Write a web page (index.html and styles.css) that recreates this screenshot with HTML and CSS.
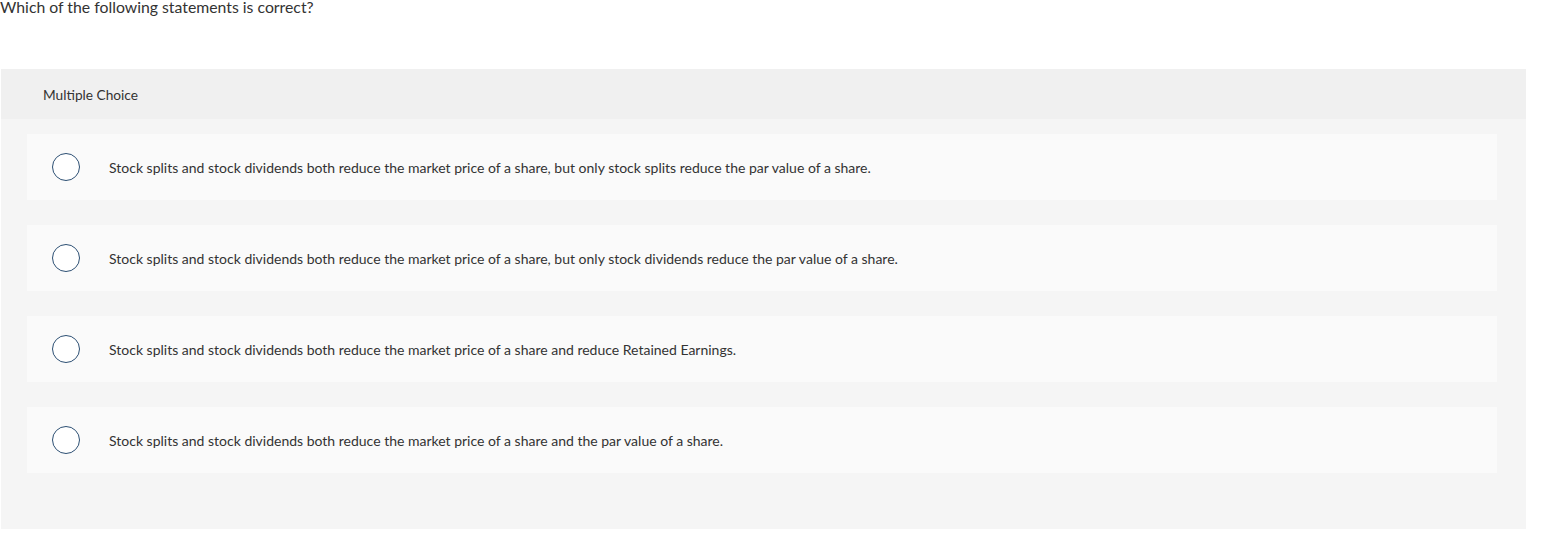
FILE: index.html
```html
<!DOCTYPE html>
<html>
<head>
<meta charset="utf-8">
<link rel="stylesheet" href="styles.css">
</head>
<body>
<p class="prompt">Which of the following statements is correct?</p>
<div class="question">
  <div class="qhead">Multiple Choice</div>
  <div class="choices">
    <div class="choice"><span class="radio"></span><span class="label">Stock splits and stock dividends both reduce the market price of a share, but only stock splits reduce the par value of a share.</span></div>
    <div class="choice"><span class="radio"></span><span class="label">Stock splits and stock dividends both reduce the market price of a share, but only stock dividends reduce the par value of a share.</span></div>
    <div class="choice"><span class="radio"></span><span class="label">Stock splits and stock dividends both reduce the market price of a share and reduce Retained Earnings.</span></div>
    <div class="choice"><span class="radio"></span><span class="label">Stock splits and stock dividends both reduce the market price of a share and the par value of a share.</span></div>
  </div>
</div>
</body>
</html>
```
FILE: styles.css
```css
html, body {
  margin: 0;
  padding: 0;
  background: #ffffff;
}
body {
  font-family: Lato, "Liberation Sans", sans-serif;
  color: #333333;
}
.prompt {
  margin: 0;
  font-size: 15.8px;
  line-height: 14px;
  height: 69px;
  color: #333;
}
.question {
  margin-left: 1px;
  width: 1525px;
  height: 460px;
  background: #f5f5f5;
  box-sizing: border-box;
}
.qhead {
  height: 50px;
  background: #f0f0f0;
  display: flex;
  align-items: center;
  padding-left: 42px;
  font-size: 13.7px;
  color: #333;
}
.choices {
  padding: 15px 29px 0 26px;
  display: flex;
  flex-direction: column;
  gap: 25px;
}
.choice {
  height: 66px;
  background: #fafafa;
  display: flex;
  align-items: center;
  padding-left: 25px;
}
.radio {
  width: 26px;
  height: 26px;
  border: 1.5px solid #2c4f73;
  border-radius: 50%;
  background: #fff;
  flex: none;
}
.label {
  margin-left: 29px;
  font-size: 14px;
  color: #333;
}
```
